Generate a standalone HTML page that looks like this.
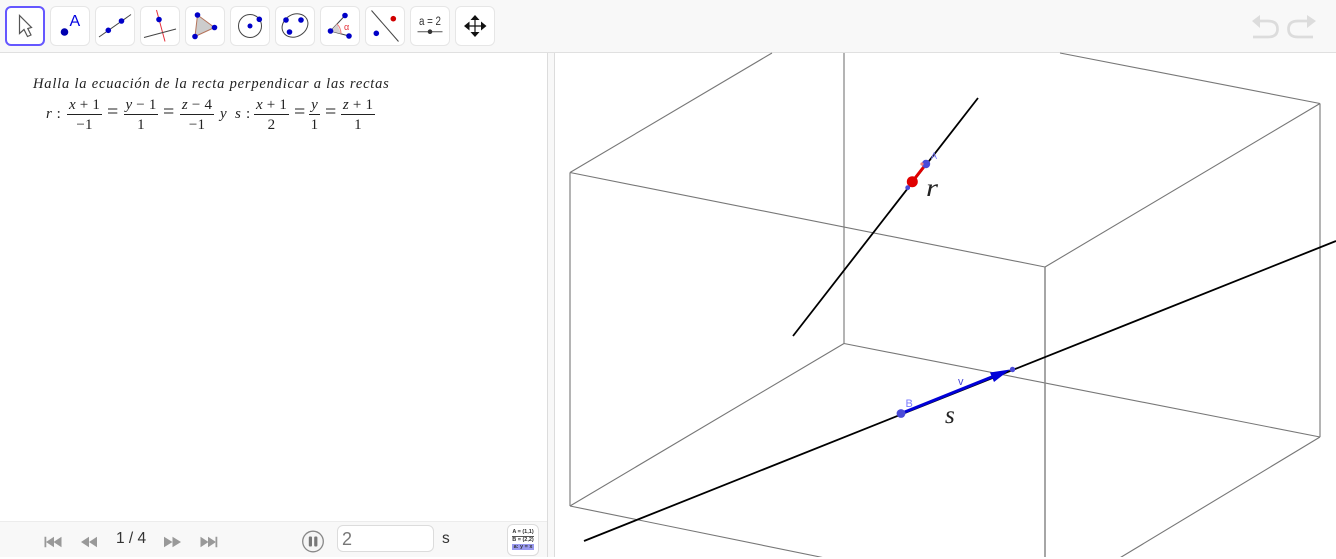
<!DOCTYPE html>
<html><head><meta charset="utf-8"><style>
html,body{margin:0;padding:0;width:1336px;height:559px;overflow:hidden;background:#fff}
body{position:relative;font-family:"Liberation Sans",sans-serif}
.abs{position:absolute}
.btn{position:absolute;top:6px;width:38px;height:38px;border:1px solid #e6e6e6;border-radius:6px;background:#fff}
.t{position:absolute;font-family:"Liberation Serif",serif;font-style:italic;color:#222;white-space:nowrap}
.n{font-style:normal}
.f{font-size:15px;text-align:center;letter-spacing:.2px}
.d{font-style:normal}
.e{font-size:20px;font-style:normal;top:101px}
.bar{position:absolute;height:1px;background:#222;top:114px}
</style></head><body>
<div class="abs" style="left:0;top:0;width:1336px;height:52px;background:#f8f8f8;border-bottom:1px solid #e0e0e0"></div>
<div class="abs" style="left:0;top:521px;width:547px;height:38px;background:#f8f8f8;border-top:1px solid #ececec;box-sizing:border-box"></div>
<div class="abs" style="left:547px;top:53px;width:8px;height:506px;background:#f8f8f8;border-left:1px solid #dcdcdc;border-right:1px solid #dcdcdc;box-sizing:border-box"></div>

<div class="btn" style="left:5px;top:6px;width:36px;height:36px;border:2px solid #6557ff"></div>
<div class="btn" style="left:50px"></div><div class="btn" style="left:95px"></div><div class="btn" style="left:140px"></div><div class="btn" style="left:185px"></div><div class="btn" style="left:230px"></div><div class="btn" style="left:275px"></div><div class="btn" style="left:320px"></div><div class="btn" style="left:365px"></div><div class="btn" style="left:410px"></div><div class="btn" style="left:455px"></div>

<svg class="abs" style="left:0;top:0" width="1336" height="559" viewBox="0 0 1336 559">
<path d="M19.500 15.500V33.500L24 29.500L27.500 36.500L31 35L27.800 28.500L31.500 27.500Z" fill="#fff" stroke="#555" stroke-width="1.200"/>
<circle cx="64.500" cy="32" r="3.800" fill="#0000b0"/>
<path d="M99 37L131 14.500" stroke="#444" stroke-width="1"/>
<circle cx="108.300" cy="30.300" r="2.800" fill="#0000c8"/><circle cx="121.500" cy="21" r="2.800" fill="#0000c8"/>
<path d="M156.500 10L165 41.500" stroke="#e5323c" stroke-width="1"/><path d="M144 37.500L176 29" stroke="#444" stroke-width="1"/>
<circle cx="159" cy="19.500" r="2.800" fill="#0000c8"/>
<path d="M197.500 15L214.500 27.500L195 36.500Z" fill="#ccc" stroke="#b5735a" stroke-width="1"/>
<circle cx="197.500" cy="15" r="2.800" fill="#0000c8"/><circle cx="214.500" cy="27.500" r="2.800" fill="#0000c8"/><circle cx="195" cy="36.500" r="2.800" fill="#0000c8"/>
<circle cx="250" cy="26" r="11.500" fill="none" stroke="#444" stroke-width="1"/><circle cx="250" cy="26" r="2.500" fill="#0000c8"/><circle cx="259.300" cy="19.300" r="2.800" fill="#0000c8"/>
<ellipse cx="295" cy="25.500" rx="13.500" ry="11" transform="rotate(-30 295 25.500)" fill="none" stroke="#444" stroke-width="1"/>
<circle cx="286" cy="20" r="2.800" fill="#0000c8"/><circle cx="301" cy="20" r="2.800" fill="#0000c8"/><circle cx="289.500" cy="32" r="2.800" fill="#0000c8"/>
<path d="M330.500 31L345 15.500M330.500 31L349 36" stroke="#444" stroke-width="1"/>
<path d="M330.500 31L337 24L341 33.800Z" fill="#d5d0d0"/><path d="M337 24Q341 28 341 33.800" fill="none" stroke="#f08080" stroke-width="1"/>
<circle cx="345" cy="15.500" r="2.800" fill="#0000c8"/><circle cx="330.500" cy="31" r="2.800" fill="#0000c8"/><circle cx="349" cy="36" r="2.800" fill="#0000c8"/>
<text x="344" y="30" font-family="Liberation Sans" font-size="9" fill="#e5323c">α</text>
<path d="M371.500 10.500L398.500 41.500" stroke="#444" stroke-width="1"/>
<circle cx="393.300" cy="18.700" r="2.800" fill="#d00000"/><circle cx="376.300" cy="33.300" r="2.800" fill="#0000c8"/>
<path d="M417.500 31.700H442.500" stroke="#555" stroke-width="1"/><circle cx="430" cy="31.700" r="2.300" fill="#333"/>
<text x="419" y="25" font-family="Liberation Sans" font-size="11.500" fill="#333" textLength="22" lengthAdjust="spacingAndGlyphs">a = 2</text>
<path d="M475 26V20M475 26V32M475 26H469M475 26H481" stroke="#111" stroke-width="1.200"/>
<path d="M475 15L479.500 20H470.500ZM475 37L479.500 32H470.500ZM464 26L469.500 21.500V30.500ZM486.500 26L481 21.500V30.500Z" fill="#111"/>

<g fill="none" stroke="#dcdcdc" stroke-width="2.700">
<path d="M1258 21H1268Q1277.500 21 1277.500 29Q1277.500 37 1268 37H1253"/>
<path d="M1308 21H1298Q1288.500 21 1288.500 29Q1288.500 37 1298 37H1313"/>
</g>
<path d="M1252 21L1260 15V28ZM1316 21L1307 15V28Z" fill="#dcdcdc"/>

<g fill="#999">
<path d="M44.500 536.700h1.800v10.500h-1.800ZM54 536.700v10.500l-8-5.200ZM61.500 536.700v10.500l-8-5.200Z"/>
<path d="M89 536.700v10.500l-8-5.200ZM97 536.700v10.500l-8-5.200Z"/>
<path d="M164 536.700v10.500l8.500-5.200ZM172.500 536.700v10.500l8.500-5.200Z"/>
<path d="M200.500 536.700v10.500l8-5.200ZM208 536.700v10.500l8-5.200ZM215.500 536.700h1.800v10.500h-1.800Z"/>
</g>
<circle cx="313" cy="541.500" r="10.300" fill="#f5f5f5" stroke="#888" stroke-width="1.300"/>
<rect x="308.800" y="536.500" width="3.200" height="10" rx="1" fill="#777"/><rect x="314.200" y="536.500" width="3.200" height="10" rx="1" fill="#777"/>

<g fill="none" stroke="#777" stroke-width="1.100">
<path d="M570 172.500L1045 267M570 172.500L772 53M1045 267L1320 103.500M1320 103.500L1060 53M570 172.500V506M570 506L844 343.500M844 53V343.500M844 343.500L1320 437M1320 437L1118 559M570 506L830 559M1320 103.500V437"/>
</g>
<path d="M1045 267V559" stroke="#888" stroke-width="1.500" fill="none"/>
<g stroke="#000" stroke-width="1.800" fill="none"><path d="M793 336L978 98M584 541L1336 241"/></g>
<path d="M912 182L926 164" stroke="#e00000" stroke-width="3"/>
<path d="M901 413.500L993 376.500" stroke="#0000d8" stroke-width="3"/>
<path d="M1010 369.500L990 372.500L994 382Z" fill="#0000d8"/>
<circle cx="926" cy="164" r="4.200" fill="#4a4ad8"/><circle cx="912.300" cy="181.700" r="5.500" fill="#e00000"/><circle cx="907.700" cy="187.700" r="2.400" fill="#4a4ad8"/><circle cx="922" cy="164" r="1.600" fill="#f08080"/>
<circle cx="901" cy="413.500" r="4.400" fill="#4a4ad8"/><circle cx="1012.500" cy="369.500" r="2.700" fill="#4a4ad8"/>
<text x="931" y="159" font-family="Liberation Sans" font-size="9" fill="#7c7cff">A</text>
<text x="905.500" y="407" font-family="Liberation Sans" font-size="11" fill="#7c7cff">B</text>
<text x="958" y="385" font-family="Liberation Sans" font-size="11" fill="#4a4ad8">v</text>
<text x="926" y="196" font-family="Liberation Serif" font-style="italic" font-size="25" fill="#222" textLength="12" lengthAdjust="spacingAndGlyphs">r</text>
<text x="945" y="423" font-family="Liberation Serif" font-style="italic" font-size="25" fill="#222">s</text>
<text x="69.500" y="26" font-family="Liberation Sans" font-size="16" fill="#0000e0">A</text>
</svg>

<div class="t" style="left:33px;top:76px;font-size:14.500px;letter-spacing:.8px">Halla la ecuación de la recta perpendicar a las rectas</div>
<div class="t" style="left:46px;top:106px;font-size:15px">r&nbsp;<span class="n" style="margin-left:1px">:</span></div>

<div class="t f" style="left:67px;top:97px;width:35px">x <span class="n">+ 1</span></div><div class="bar" style="left:67px;width:35px"></div><div class="t f d" style="left:67px;top:117px;width:35px">−1</div>
<div class="t e" style="left:107px">=</div>
<div class="t f" style="left:124px;top:97px;width:34px">y <span class="n">− 1</span></div><div class="bar" style="left:124px;width:34px"></div><div class="t f d" style="left:124px;top:117px;width:34px">1</div>
<div class="t e" style="left:163px">=</div>
<div class="t f" style="left:180px;top:97px;width:34px">z <span class="n">− 4</span></div><div class="bar" style="left:180px;width:34px"></div><div class="t f d" style="left:180px;top:117px;width:34px">−1</div>
<div class="t" style="left:220px;top:106px;font-size:15px">y</div>
<div class="t" style="left:235px;top:106px;font-size:15px">s</div>
<div class="t n" style="left:246px;top:106px;font-size:15px;font-style:normal">:</div>
<div class="t f" style="left:254px;top:97px;width:35px">x <span class="n">+ 1</span></div><div class="bar" style="left:254px;width:35px"></div><div class="t f d" style="left:254px;top:117px;width:35px">2</div>
<div class="t e" style="left:294px">=</div>
<div class="t f" style="left:309px;top:97px;width:11px">y</div><div class="bar" style="left:309px;width:11px"></div><div class="t f d" style="left:309px;top:117px;width:11px">1</div>
<div class="t e" style="left:325px">=</div>
<div class="t f" style="left:341px;top:97px;width:34px">z <span class="n">+ 1</span></div><div class="bar" style="left:341px;width:34px"></div><div class="t f d" style="left:341px;top:117px;width:34px">1</div>

<div class="abs" style="left:116px;top:530px;font-size:15.500px;color:#333;line-height:18px">1 / 4</div>
<div class="abs" style="left:337px;top:525px;width:97px;height:27px;box-sizing:border-box;border:1px solid #dcdcdc;border-radius:6px;background:#fff;color:#777;font-size:18px;line-height:26px;padding-left:4px">2</div>
<div class="abs" style="left:442px;top:531px;font-size:15.500px;color:#333;line-height:16px">s</div>
<div class="abs" style="left:507px;top:524px;width:32px;height:32px;box-sizing:border-box;border:1px solid #dcdcdc;border-radius:6px;background:#fff"></div>
<div class="abs" style="left:512px;top:529px;width:22px;font-size:5.500px;line-height:7px;color:#333;text-align:center;font-weight:bold;white-space:nowrap">A = (1,1)<div style="border-top:1px solid #555">B = (2,2)</div><div style="background:#9a9af0;line-height:6px">a: y = x</div></div>
<div class="abs" style="left:0;top:557px;width:1336px;height:2px;background:#fff"></div>
</body></html>
